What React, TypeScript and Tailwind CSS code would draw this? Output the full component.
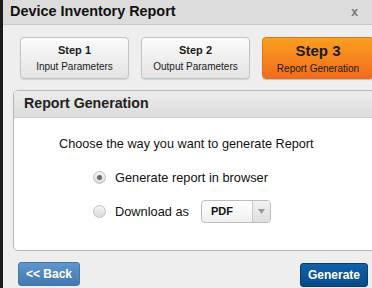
const StepButton = ({
  step,
  label,
  active,
}: {
  step: string;
  label: string;
  active?: boolean;
}) => (
  <div
    className={
      active
        ? "flex w-[112px] shrink-0 flex-col items-center justify-center rounded-[4px] border border-[#e0731a] bg-gradient-to-b from-[#f9a01f] to-[#f26a1d] text-[#1a1a1a] shadow-[0_1px_1px_rgba(0,0,0,0.2)]"
        : "flex w-[109px] shrink-0 flex-col items-center justify-center rounded-[4px] border border-[#c4c4c4] bg-gradient-to-b from-[#fbfbfb] to-[#e3e3e3] text-[#1a1a1a] shadow-[0_1px_1px_rgba(0,0,0,0.12)]"
    }
  >
    <span className={active ? "text-[15px] font-bold leading-[18px]" : "text-[11px] font-bold leading-[14px]"}>
      {step}
    </span>
    <span className={active ? "mt-[2px] text-[10px] leading-[13px]" : "mt-[3px] text-[10px] leading-[13px]"}>
      {label}
    </span>
  </div>
);

const Radio = ({ checked }: { checked?: boolean }) => (
  <span className="flex h-[13px] w-[13px] items-center justify-center rounded-full border border-[#c2c2c2] bg-gradient-to-b from-[#f4f4f4] to-[#dadada]">
    {checked && <span className="h-[5px] w-[5px] rounded-full bg-[#6a6a6a]" />}
  </span>
);

export default function App() {
  return (
    <div
      className="flex h-[288px] w-[372px] flex-col overflow-hidden border-l-[3px] border-[#1b1b1b] bg-[#eeeeee] text-[#111]"
      style={{ fontFamily: '"Liberation Sans", Arial, sans-serif' }}
    >
      {/* Title bar */}
      <div className="flex h-[25px] shrink-0 items-center justify-between border-b border-[#c8c8c8] bg-[#dcdcdc] pl-[7px] pr-[14px]">
        <span className="text-[14.4px] font-bold">Device Inventory Report</span>
        <span className="text-[12px] font-bold text-[#777]">x</span>
      </div>

      {/* Steps */}
      <div className="mt-[12px] flex h-[42px] shrink-0 gap-[12px] pl-[17px]">
        <StepButton step="Step 1" label="Input Parameters" />
        <StepButton step="Step 2" label="Output Parameters" />
        <StepButton step="Step 3" label="Report Generation" active />
      </div>

      {/* Panel */}
      <div className="ml-[10px] mt-[11px] flex h-[161px] w-[380px] shrink-0 flex-col overflow-hidden rounded-[5px] border border-[#b8b8b8] bg-white">
        <div className="flex h-[27px] shrink-0 items-center border-b border-[#cfcfcf] bg-gradient-to-b from-[#ececec] to-[#dcdcdc] pl-[10px]">
          <span className="text-[14.2px] font-bold text-[#222]">Report Generation</span>
        </div>
        <div className="flex flex-col pl-[45px] pt-[18px]">
          <span className="text-[12.7px] leading-[16px]">Choose the way you want to generate Report</span>
          <div className="ml-[34px] mt-[16px] flex items-center gap-[9px]">
            <Radio checked />
            <span className="text-[12.8px]">Generate report in browser</span>
          </div>
          <div className="ml-[34px] mt-[13px] flex items-center gap-[9px]">
            <Radio />
            <span className="text-[12.8px]">Download as</span>
            <div className="ml-[3px] flex h-[23px] w-[70px] items-stretch overflow-hidden rounded-[4px] border border-[#bdbdbd] bg-gradient-to-b from-white to-[#f0f0f0]">
              <span className="flex flex-1 items-center pl-[9px] text-[11px] font-bold">PDF</span>
              <span className="flex w-[18px] items-center justify-center border-l border-[#c8c8c8] bg-gradient-to-b from-[#f2f2f2] to-[#dedede]">
                <svg width="7" height="5" viewBox="0 0 7 5">
                  <path d="M0 0h7L3.5 5z" fill="#999" />
                </svg>
              </span>
            </div>
          </div>
        </div>
      </div>

      {/* Footer buttons */}
      <div className="mt-[10px] flex items-center justify-between pl-[15px] pr-[4px]">
        <button className="h-[24px] w-[62px] rounded-[3px] border border-[#3f78ad] bg-gradient-to-b from-[#6196c9] to-[#4479b0] text-[12px] font-bold text-white">
          &lt;&lt; Back
        </button>
        <button className="mt-[2px] h-[24px] w-[68px] rounded-[3px] border border-[#063d73] bg-gradient-to-b from-[#1361a8] to-[#074a8b] text-[12px] font-bold text-white">
          Generate
        </button>
      </div>
    </div>
  );
}
